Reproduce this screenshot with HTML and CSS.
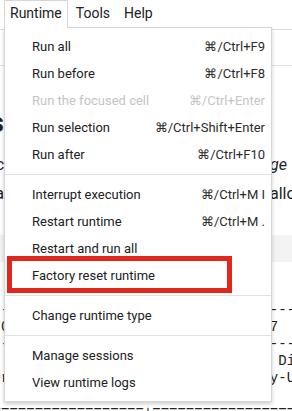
FILE: index.html
```html
<!DOCTYPE html>
<html>
<head>
<meta charset="utf-8">
<title>Runtime menu</title>
<link rel="stylesheet" href="styles.css">
</head>
<body>
<div class="page">
  <div class="menubar">
    <div class="mb-item active">Runtime</div>
    <div class="mb-item">Tools</div>
    <div class="mb-item">Help</div>
  </div>
  <div class="toolbar"></div>
  <div class="content">
    <div class="row heading"><span class="frag-l">GPUs</span></div>
    <div class="row prose italic"><span class="frag-l">c</span><span class="frag-r">ge</span></div>
    <div class="row prose second"><span class="frag-l">a</span><span class="frag-r">allo</span></div>
    <div class="code-band"></div>
    <pre class="output">+-----------------------------------------------------------------------------+
| NVIDIA-SMI 470.57.02    Driver Version: 460.27     CUDA Version: 11.2      |
|-------------------------------+----------------------+----------------------+
| GPU  Name        Persistence-M| Bus-Id        Disp.A | Volatile Uncorr. ECC |
| Fan  Temp  Perf  Pwr:Usage/Cap|         Memory-Usage | GPU-Util  Compute M. |
|                               |                      |               MIG M. |
|===============================+======================+======================|</pre>
  </div>

  <div class="menu">
    <div class="mi"><span>Run all</span><span class="sc">⌘/Ctrl+F9</span></div>
    <div class="mi"><span>Run before</span><span class="sc">⌘/Ctrl+F8</span></div>
    <div class="mi disabled"><span>Run the focused cell</span><span class="sc">⌘/Ctrl+Enter</span></div>
    <div class="mi"><span>Run selection</span><span class="sc">⌘/Ctrl+Shift+Enter</span></div>
    <div class="mi"><span>Run after</span><span class="sc">⌘/Ctrl+F10</span></div>
    <div class="sep"></div>
    <div class="mi"><span>Interrupt execution</span><span class="sc">⌘/Ctrl+M I</span></div>
    <div class="mi"><span>Restart runtime</span><span class="sc">⌘/Ctrl+M .</span></div>
    <div class="mi"><span>Restart and run all</span></div>
    <div class="mi marked"><span>Factory reset runtime</span></div>
    <div class="sep"></div>
    <div class="mi"><span>Change runtime type</span></div>
    <div class="sep"></div>
    <div class="mi"><span>Manage sessions</span></div>
    <div class="mi"><span>View runtime logs</span></div>
  </div>
</div>
</body>
</html>
```
FILE: styles.css
```css
html, body {
  margin: 0;
  padding: 0;
  overflow: hidden;
  background: #fff;
}

body {
  font-family: Roboto, "Liberation Sans", sans-serif;
  color: #202124;
}

.page {
  position: relative;
  width: 292px;
  height: 411px;
  overflow: hidden;
}

/* ---------- menubar ---------- */
.menubar {
  display: flex;
  align-items: flex-start;
  gap: 2px;
  padding-left: 4px;
  height: 29px;
  border-bottom: 1px solid #dadce0;
  font-size: 14px;
}

.mb-item {
  box-sizing: border-box;
  height: 28px;
  padding: 0 5px 2px;
  line-height: 25px;
  border: 1px solid transparent;
  border-bottom: 0;
  white-space: nowrap;
}

.mb-item.active {
  position: relative;
  z-index: 3;
  background: #fff;
  border-color: #d6d6d6;
}

.toolbar {
  height: 35px;
  border-bottom: 1px solid #e3e3e3;
}

/* ---------- background notebook ---------- */
.content {
  display: flex;
  flex-direction: column;
}

.row {
  display: flex;
  justify-content: space-between;
  white-space: nowrap;
}

.frag-l {
  display: flex;
  justify-content: flex-end;
  width: 4px;
  overflow: hidden;
}

.frag-r {
  width: 22px;
  overflow: hidden;
}

.heading {
  margin-top: 40px;
  height: 34px;
  line-height: 34px;
  font-size: 28px;
  font-weight: 700;
}

.prose {
  height: 24px;
  line-height: 24px;
  font-size: 16px;
}

.italic {
  margin-top: 13px;
}

.italic .frag-r {
  font-style: italic;
}

.second {
  margin-top: 5px;
}

.code-band {
  margin-top: 29px;
  height: 27px;
  background: #f3f3f3;
}

.output {
  margin: 40px 0 0 -125px;
  font-family: "Liberation Mono", monospace;
  font-size: 14px;
  line-height: 17px;
  color: #212121;
  white-space: pre;
}

/* ---------- dropdown menu ---------- */
.menu {
  position: absolute;
  top: 27px;
  left: 4px;
  z-index: 2;
  box-sizing: border-box;
  width: 268px;
  padding: 5px 0;
  background: #fff;
  border: 1px solid #d6d6d6;
  box-shadow: 0 2px 4px rgba(0, 0, 0, 0.2);
  font-size: 13px;
}

.mi {
  display: flex;
  justify-content: space-between;
  align-items: center;
  height: 27px;
  padding: 0 6px 0 27px;
  white-space: nowrap;
  color: #202124;
}

.mi .sc {
  color: #2b2b2b;
}

.mi.disabled,
.mi.disabled .sc {
  color: #c4c4c4;
}

.mi.marked {
  position: relative;
}

.mi.marked::after {
  content: "";
  position: absolute;
  left: 2px;
  top: -6px;
  width: 225px;
  height: 37px;
  box-sizing: border-box;
  border: 5px solid #e2261b;
}

.sep {
  height: 1px;
  margin: 6px 0;
  background: #e2e2e2;
}
```
